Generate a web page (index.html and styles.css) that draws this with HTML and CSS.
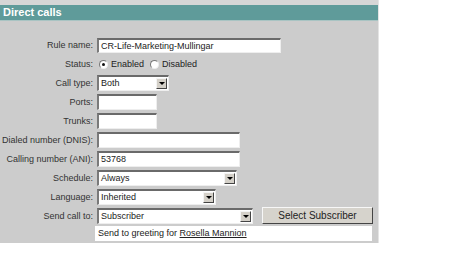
FILE: index.html
```html
<!DOCTYPE html>
<html lang="en">
<head>
<meta charset="UTF-8" />
<link rel="stylesheet" href="styles.css">
</head>
<body>

<div class="panel">
  <div class="panel__header">Direct calls</div>

  <div class="form">
    <label class="form__label">Rule name:</label>
    <div class="form__field"><span class="input input--rule">CR-Life-Marketing-Mullingar</span></div>

    <label class="form__label">Status:</label>
    <div class="form__field radios">
      <span class="radio radio--on"></span><span class="radio__text">Enabled</span>
      <span class="radio"></span><span class="radio__text">Disabled</span>
    </div>

    <label class="form__label">Call type:</label>
    <div class="form__field">
      <span class="select select--calltype"><span class="select__text">Both</span><span class="select__btn"></span></span>
    </div>

    <label class="form__label">Ports:</label>
    <div class="form__field"><span class="input input--short"></span></div>

    <label class="form__label">Trunks:</label>
    <div class="form__field"><span class="input input--short"></span></div>

    <label class="form__label">Dialed number (DNIS):</label>
    <div class="form__field"><span class="input input--num"></span></div>

    <label class="form__label">Calling number (ANI):</label>
    <div class="form__field"><span class="input input--num">53768</span></div>

    <label class="form__label">Schedule:</label>
    <div class="form__field">
      <span class="select select--schedule"><span class="select__text">Always</span><span class="select__btn"></span></span>
    </div>

    <label class="form__label">Language:</label>
    <div class="form__field">
      <span class="select select--lang"><span class="select__text">Inherited</span><span class="select__btn"></span></span>
    </div>

    <label class="form__label">Send call to:</label>
    <div class="form__field send">
      <span class="select select--send"><span class="select__text">Subscriber</span><span class="select__btn"></span></span>
      <button class="btn">Select Subscriber</button>
    </div>

    <div class="form__label"></div>
    <div class="greeting">Send to greeting for <a href="#">Rosella Mannion</a></div>
  </div>
</div>

</body>
</html>
```

FILE: styles.css
```css
body {
  margin: 0;
  background: #fff;
  font-family: "Liberation Sans", Arial, sans-serif;
  font-size: 9px;
  color: #333;
}

.panel {
  width: 379px;
  height: 243px;
  background: #cccccc;
  border-right: 1px solid #e4e4e4;
  box-sizing: border-box;
  padding-top: 5px;
  background-image: linear-gradient(#d6d6d6, #d6d6d6);
  background-size: 100% 5px;
  background-repeat: no-repeat;
}

.panel__header {
  height: 15px;
  background: #5f9b9a;
  border-bottom: 1px solid #a9c4c3;
  color: #fff;
  font-weight: bold;
  font-size: 11px;
  line-height: 15px;
  padding-left: 3px;
}

.form {
  display: grid;
  grid-template-columns: 93px 1fr;
  column-gap: 4px;
  grid-auto-rows: 16px;
  row-gap: 3px;
  padding-top: 16px;
}

.form__label {
  text-align: right;
  line-height: 16px;
  white-space: nowrap;
}

.form__field {
  display: flex;
  align-items: center;
}

.input {
  display: block;
  box-sizing: border-box;
  height: 16px;
  background: #fff;
  border-style: solid;
  border-width: 2px 1px 1px 2px;
  border-color: #6a6a6a #eeeeee #eeeeee #7a7a7a;
  padding-left: 2px;
  line-height: 13px;
  color: #222;
}

.input--rule { width: 184px; height: 15px; }
.input--short { width: 60px; }
.input--num { width: 143px; }

.radios {
  gap: 3px;
}

.radio {
  width: 7px;
  height: 7px;
  border-radius: 50%;
  background: #fff;
  border: 1px solid #777;
  border-right-color: #eee;
  border-bottom-color: #eee;
  position: relative;
  margin-left: 2px;
}

.radio--on::after {
  content: "";
  position: absolute;
  left: 2px;
  top: 2px;
  width: 3px;
  height: 3px;
  border-radius: 50%;
  background: #111;
}

.radio__text {
  margin-right: 1px;
  color: #222;
}

.select {
  display: flex;
  box-sizing: border-box;
  height: 16px;
  background: #fff;
  border-style: solid;
  border-width: 2px 1px 1px 2px;
  border-color: #6a6a6a #eeeeee #eeeeee #7a7a7a;
}

.select__text {
  flex: 1;
  padding-left: 2px;
  line-height: 13px;
  color: #222;
}

.select__btn {
  width: 11px;
  height: 11px;
  margin: 1px 1px 0 0;
  box-sizing: border-box;
  background: #d4d0c8;
  border: 1px solid;
  border-color: #f4f4f4 #444 #444 #f4f4f4;
  position: relative;
}

.select__btn::after {
  content: "";
  position: absolute;
  left: 2px;
  top: 3px;
  border-left: 3px solid transparent;
  border-right: 3px solid transparent;
  border-top: 3px solid #000;
}

.select--calltype { width: 72px; }
.select--schedule { width: 140px; }
.select--lang { width: 119px; }
.select--send { width: 156px; }

.send {
  gap: 9px;
}

.btn {
  width: 111px;
  height: 17px;
  margin-top: -1px;
  padding: 0;
  background: #d6d3cc;
  border: 1px solid;
  border-color: #f7f7f7 #444 #444 #f7f7f7;
  font-family: "Liberation Sans", Arial, sans-serif;
  font-size: 10px;
  color: #222;
}

.greeting {
  width: 277px;
  margin-left: -2px;
  margin-top: -1px;
  height: 15px;
  background: #fff;
  padding-left: 3px;
  box-sizing: border-box;
  line-height: 15px;
  color: #222;
}

.greeting a {
  color: #222;
}
```
